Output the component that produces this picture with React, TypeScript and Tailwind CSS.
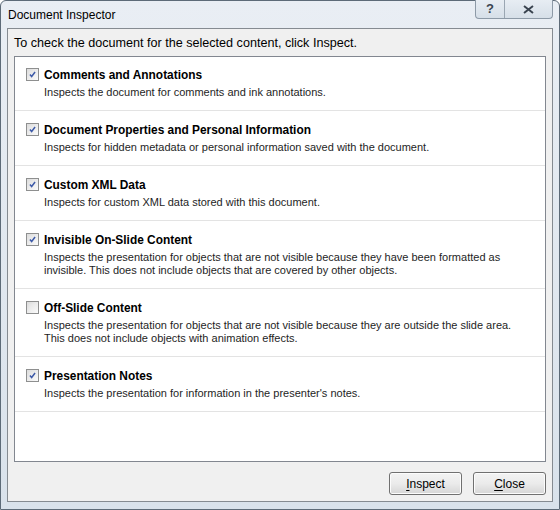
const items = [
  {
    title: "Comments and Annotations",
    desc: ["Inspects the document for comments and ink annotations."],
    checked: true,
  },
  {
    title: "Document Properties and Personal Information",
    desc: ["Inspects for hidden metadata or personal information saved with the document."],
    checked: true,
  },
  {
    title: "Custom XML Data",
    desc: ["Inspects for custom XML data stored with this document."],
    checked: true,
  },
  {
    title: "Invisible On-Slide Content",
    desc: [
      "Inspects the presentation for objects that are not visible because they have been formatted as",
      "invisible. This does not include objects that are covered by other objects.",
    ],
    checked: true,
  },
  {
    title: "Off-Slide Content",
    desc: [
      "Inspects the presentation for objects that are not visible because they are outside the slide area.",
      "This does not include objects with animation effects.",
    ],
    checked: false,
  },
  {
    title: "Presentation Notes",
    desc: ["Inspects the presentation for information in the presenter's notes."],
    checked: true,
  },
];

// ─── Checkbox ───────────────────────────────────────────────────────────────

function CheckBox({ checked }: { checked: boolean }) {
  return (
    <div className="w-[13px] h-[13px] shrink-0 border border-[#8e8f8f] bg-gradient-to-br from-[#dcdcdc] to-[#fbfbfb] p-[2px]">
      <div className="w-full h-full bg-gradient-to-br from-[#e4e4e4] to-[#f6f6f6] flex items-center justify-center">
        {checked && (
          <svg width="9" height="9" viewBox="0 0 9 9">
            <path
              d="M1.2 4.4 L3.4 7 L7.8 1.2"
              fill="none"
              stroke="#3d5aa8"
              strokeWidth="1.9"
            />
          </svg>
        )}
      </div>
    </div>
  );
}

// ─── Dialog Button ──────────────────────────────────────────────────────────

function DlgButton({ hot, rest }: { hot: string; rest: string }) {
  return (
    <button className="w-[73px] h-[23px] rounded-[3px] border border-[#707070] bg-gradient-to-b from-[#f3f3f3] via-[#ebebeb] to-[#d6d6d6] text-[12px] text-black shadow-[inset_0_0_0_1px_#fcfcfc]">
      <span className="underline underline-offset-2">{hot}</span>
      {rest}
    </button>
  );
}

// ─── Document Inspector ─────────────────────────────────────────────────────

export default function App() {
  return (
    <div
      className="w-[560px] h-[510px] bg-white"
      style={{ fontFamily: '"Liberation Sans", Arial, sans-serif' }}
    >
      <div className="w-full h-full flex flex-col rounded-t-[6px] border border-[#5d6b78] bg-gradient-to-b from-[#e9eef4] to-[#d9e2eb]">
        {/* Title Bar */}
        <div className="h-[27px] flex items-start justify-between pl-[7px] pr-[6px]">
          <span className="mt-[7px] text-[12px] leading-[15px] text-black">
            Document Inspector
          </span>
          <div className="flex h-[19px] -mt-px rounded-b-[4px] border border-t-0 border-[#8d9aa7] overflow-hidden bg-gradient-to-b from-[#e7edf3] to-[#d6dfe8]">
            <div className="w-[29px] flex items-center justify-center border-r border-[#9aa6b2] text-[13px] font-bold text-[#3a4450]">
              ?
            </div>
            <div className="w-[47px] flex items-center justify-center">
              <svg width="11" height="9" viewBox="0 0 11 9">
                <path
                  d="M1 1 L10 8 M10 1 L1 8"
                  stroke="#3a4450"
                  strokeWidth="2"
                  fill="none"
                />
              </svg>
            </div>
          </div>
        </div>

        {/* Client Area */}
        <div className="flex-1 ml-[6px] mr-[6px] mb-[7px] border border-[#858b91] bg-[#f0f0f0] flex flex-col px-[6px] pb-[6px]">
          <p className="pt-[6px] pb-[5px] text-[12.6px] leading-[16px] text-black">
            To check the document for the selected content, click Inspect.
          </p>

          {/* List */}
          <div className="flex-1 border border-[#828790] bg-white flex flex-col">
            {items.map((item, i) => (
              <div
                key={item.title}
                className={`flex gap-[5px] pl-[11px] pb-[11px] border-b border-[#e3e3e3] ${
                  i === 0 ? "pt-[10px]" : "pt-[11px]"
                }`}
              >
                <div className="pt-[1px]">
                  <CheckBox checked={item.checked} />
                </div>
                <div className="flex flex-col">
                  <p className="text-[11.9px] leading-[16px] font-bold text-black">
                    {item.title}
                  </p>
                  <div className="mt-[3px]">
                    {item.desc.map((line) => (
                      <p
                        key={line}
                        className="text-[11px] leading-[13px] text-[#1e1e1e] whitespace-nowrap"
                      >
                        {line}
                      </p>
                    ))}
                  </div>
                </div>
              </div>
            ))}
          </div>

          {/* Buttons */}
          <div className="flex justify-end gap-[11px] pt-[10px]">
            <DlgButton hot="I" rest="nspect" />
            <DlgButton hot="C" rest="lose" />
          </div>
        </div>
      </div>
    </div>
  );
}
